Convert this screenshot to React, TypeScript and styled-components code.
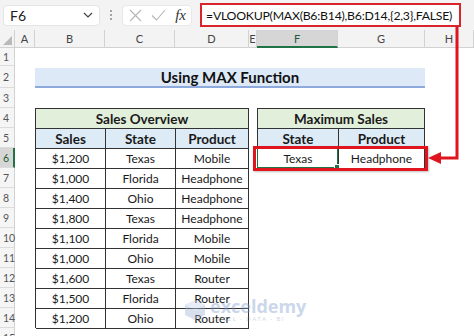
import { FC } from "react";
import styled, { createGlobalStyle } from "styled-components";

const GlobalStyle = createGlobalStyle`
  html, body {
    margin: 0;
    padding: 0;
    background: #ffffff;
    overflow: hidden;
  }
  body {
    font-family: "Lato", "Liberation Sans", sans-serif;
  }
`;

const Page = styled.div`
  position: relative;
  width: 474px;
  height: 336px;
  overflow: hidden;
  background: #ffffff;
`;

// formula bar
const Bar = styled.div`
  height: 30px;
  background: #f3f3f3;
  display: flex;
  align-items: center;
  padding-left: 3px;
  box-sizing: border-box;
`;

const NameBox = styled.div`
  width: 97px;
  height: 21px;
  background: #fff;
  border-radius: 4px;
  border: 1px solid #e4e4e4;
  box-sizing: border-box;
  display: flex;
  align-items: center;
  justify-content: space-between;
  padding: 0 6px 0 6px;
  font-size: 14px;
  color: #222;
`;

const Dots = styled.div`
  width: 22px;
  display: flex;
  flex-direction: column;
  align-items: center;
  gap: 2px;
  span {
    width: 2px;
    height: 2px;
    background: #8a8a8a;
    border-radius: 1px;
  }
`;

const FxBox = styled.div`
  width: 70px;
  height: 21px;
  background: #fff;
  border-radius: 4px;
  border: 1px solid #e8e8e8;
  box-sizing: border-box;
  display: flex;
  align-items: center;
  justify-content: space-between;
  padding: 0 5px 0 6px;
`;

const Fx = styled.span`
  font-family: "Liberation Serif", serif;
  font-style: italic;
  font-size: 15px;
  color: #333;
`;

const Formula = styled.div`
  margin-left: 8px;
  width: 261px;
  height: 24px;
  background: #fff;
  border: 2px solid #d9242b;
  box-sizing: border-box;
  display: flex;
  align-items: center;
  padding-left: 4px;
  font-size: 12.3px;
  letter-spacing: -0.25px;
  color: #111;
  white-space: nowrap;
  overflow: hidden;
`;

// sheet
const Sheet = styled.div`
  display: grid;
  grid-template-columns: 15px 20px 70px 70px 74px 8px 81px 87px 1fr;
  grid-template-rows: 18px 18px 22px 20px repeat(12, 20px);
`;

const Corner = styled.div`
  grid-column: 1;
  grid-row: 1;
  background: #f3f3f3;
  border-bottom: 1px solid #d2d2d2;
  border-right: 1px solid #d2d2d2;
  box-sizing: border-box;
  position: relative;
  &::after {
    content: "";
    position: absolute;
    right: 2px;
    bottom: 2px;
    border-left: 9px solid transparent;
    border-bottom: 9px solid #b9b9b9;
  }
`;

const ColHead = styled.div<{ $col: number; $active?: boolean }>`
  grid-column: ${(p) => p.$col};
  grid-row: 1;
  background: ${(p) => (p.$active ? "#d6d6d6" : "#f3f3f3")};
  border-right: 1px solid #d2d2d2;
  border-bottom: ${(p) => (p.$active ? "2px solid #217346" : "1px solid #d2d2d2")};
  box-sizing: border-box;
  display: flex;
  align-items: center;
  justify-content: center;
  font-size: 11px;
  color: ${(p) => (p.$active ? "#1f5c38" : "#444")};
  overflow: hidden;
`;

const RowHead = styled.div<{ $row: number; $active?: boolean }>`
  grid-column: 1;
  grid-row: ${(p) => p.$row};
  background: ${(p) => (p.$active ? "#d6d6d6" : "#f5f5f5")};
  border-bottom: 1px solid #dcdcdc;
  border-right: ${(p) => (p.$active ? "2px solid #217346" : "1px solid #d2d2d2")};
  box-sizing: border-box;
  display: flex;
  align-items: center;
  padding-left: 3px;
  font-size: 10.5px;
  color: ${(p) => (p.$active ? "#1f5c38" : "#555")};
`;

const TitleBand = styled.div`
  grid-column: 3 / 9;
  grid-row: 3;
  margin-top: 2px;
  background: #dde9f6;
  border-bottom: 2px solid #8ea9db;
  display: flex;
  align-items: center;
  justify-content: center;
  font-weight: 700;
  font-size: 15px;
  color: #111;
`;

const Table = styled.div<{ $col: string; $row: string; $cols: string }>`
  grid-column: ${(p) => p.$col};
  grid-row: ${(p) => p.$row};
  display: grid;
  grid-template-columns: ${(p) => p.$cols};
  grid-auto-rows: 20px;
  border-top: 1px solid #333;
  border-left: 1px solid #333;
  box-sizing: border-box;
`;

const Cell = styled.div<{ $kind?: "title" | "head" | "data"; $span?: number }>`
  grid-column: ${(p) => (p.$span ? `span ${p.$span}` : "auto")};
  background: ${(p) =>
    p.$kind === "title" ? "#e2efda" : p.$kind === "head" ? "#ddebf7" : "#fff"};
  border-right: 1px solid #333;
  border-bottom: 1px solid #333;
  box-sizing: border-box;
  display: flex;
  align-items: center;
  justify-content: center;
  font-size: ${(p) => (p.$kind === "data" || !p.$kind ? "12px" : "13.5px")};
  font-weight: ${(p) => (p.$kind === "data" || !p.$kind ? 400 : 700)};
  color: #1a1a1a;
  white-space: nowrap;
  position: relative;
`;

const Selected = styled.div`
  position: absolute;
  inset: -1px 0 0 -1px;
  border: 1px solid #217346;
  pointer-events: none;
  &::after {
    content: "";
    position: absolute;
    right: -3px;
    bottom: -3px;
    width: 4px;
    height: 4px;
    background: #217346;
    border: 1px solid #fff;
  }
`;

const RedBox = styled.div`
  position: absolute;
  left: 253px;
  top: 146px;
  width: 175px;
  height: 25px;
  border: 3px solid #e0141e;
  box-sizing: border-box;
  box-shadow: 1px 1px 2px rgba(0, 0, 0, 0.25);
  pointer-events: none;
`;

const Arrow = styled.svg`
  position: absolute;
  left: 0;
  top: 0;
  pointer-events: none;
`;

const Watermark = styled.div`
  position: absolute;
  left: 183px;
  top: 297px;
  display: flex;
  align-items: center;
  gap: 3px;
  opacity: 0.4;
  pointer-events: none;
`;

const WmText = styled.div`
  display: flex;
  flex-direction: column;
  line-height: 1;
  b {
    font-family: "Open Sans", sans-serif;
    font-size: 18px;
    font-weight: 700;
    color: #7f9ccc;
  }
  small {
    font-size: 6px;
    letter-spacing: 1.5px;
    color: #8f9fb8;
    margin-top: 1px;
    padding-left: 2px;
  }
`;

const sales = [
  ["$1,200", "Texas", "Mobile"],
  ["$1,000", "Florida", "Headphone"],
  ["$1,400", "Ohio", "Headphone"],
  ["$1,800", "Texas", "Headphone"],
  ["$1,100", "Florida", "Mobile"],
  ["$1,000", "Ohio", "Mobile"],
  ["$1,600", "Texas", "Router"],
  ["$1,500", "Florida", "Router"],
  ["$1,200", "Ohio", "Router"],
];

const cols = ["A", "B", "C", "D", "E", "F", "G", "H"];

const App: FC = () => {
  return (
    <Page>
      <GlobalStyle />
      <Bar>
        <NameBox>
          <span>F6</span>
          <svg width="10" height="6" viewBox="0 0 10 6">
            <path d="M1 1l4 4 4-4" fill="none" stroke="#444" strokeWidth="1.2" />
          </svg>
        </NameBox>
        <Dots>
          <span />
          <span />
          <span />
        </Dots>
        <FxBox>
          <svg width="13" height="13" viewBox="0 0 13 13">
            <path d="M1 1l11 11M12 1L1 12" stroke="#b5b5b5" strokeWidth="1.1" />
          </svg>
          <svg width="15" height="12" viewBox="0 0 15 12">
            <path d="M1 6.5l4.5 4.5L14 1" fill="none" stroke="#b5b5b5" strokeWidth="1.1" />
          </svg>
          <Fx>fx</Fx>
        </FxBox>
        <Formula>=VLOOKUP(MAX(B6:B14),B6:D14,{"{"}2,3{"}"},FALSE)</Formula>
      </Bar>

      <Sheet>
        <Corner />
        {cols.map((c, i) => (
          <ColHead key={c} $col={i + 2} $active={c === "F"}>
            {c}
          </ColHead>
        ))}
        {Array.from({ length: 15 }, (_, i) => (
          <RowHead key={i} $row={i + 2} $active={i + 1 === 6}>
            {i + 1}
          </RowHead>
        ))}

        <TitleBand>Using MAX Function</TitleBand>

        <Table $col="3 / 6" $row="5 / 16" $cols="70px 70px 73px">
          <Cell $kind="title" $span={3}>
            Sales Overview
          </Cell>
          <Cell $kind="head">Sales</Cell>
          <Cell $kind="head">State</Cell>
          <Cell $kind="head">Product</Cell>
          {sales.map((r, i) =>
            r.map((v, j) => (
              <Cell key={`${i}-${j}`} $kind="data">
                {v}
              </Cell>
            ))
          )}
        </Table>

        <Table $col="7 / 9" $row="5 / 8" $cols="81px 86px">
          <Cell $kind="title" $span={2}>
            Maximum Sales
          </Cell>
          <Cell $kind="head">State</Cell>
          <Cell $kind="head">Product</Cell>
          <Cell $kind="data">
            Texas
            <Selected />
          </Cell>
          <Cell $kind="data">Headphone</Cell>
        </Table>
      </Sheet>

      <RedBox />
      <Arrow width="474" height="336" viewBox="0 0 474 336">
        <path d="M457 27V158H440" fill="none" stroke="#e0141e" strokeWidth="3" />
        <path d="M428 158l13-6v12z" fill="#e0141e" />
      </Arrow>

      <Watermark>
        <svg width="24" height="22" viewBox="0 0 24 22">
          <path d="M12 1l10 5v10l-10 5-10-5V6z" fill="#9fb3d6" />
          <path d="M12 1l10 5-10 5-10-5z" fill="#c4d2ea" />
        </svg>
        <WmText>
          <b>exceldemy</b>
          <small>EXCEL · DATA · BI</small>
        </WmText>
      </Watermark>
    </Page>
  );
};

export default App;
